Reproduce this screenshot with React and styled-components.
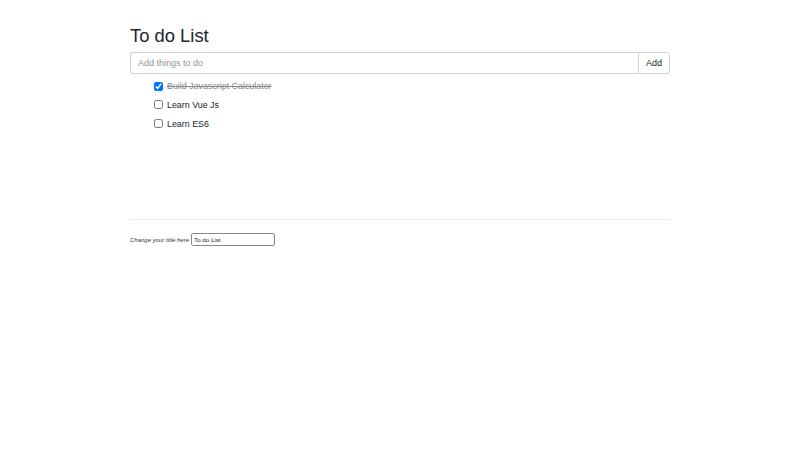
import React, { useState } from "react";
import styled, { createGlobalStyle } from "styled-components";

const GlobalStyle = createGlobalStyle`
  body {
    margin: 0;
    background: #fff;
    font-family: "Liberation Sans", Arial, sans-serif;
    color: #212529;
  }
`;

const Container = styled.div`
  width: 540px;
  margin: 0 auto;
  padding-top: 25px;
`;

const Title = styled.h1`
  margin: 0 0 5px;
  font-size: 18.4px;
  font-weight: 400;
  line-height: 1.2;
  color: #212529;
`;

const InputGroup = styled.form`
  display: flex;
  height: 22px;
  margin: 0;
`;

const TextInput = styled.input`
  flex: 1;
  min-width: 0;
  box-sizing: border-box;
  height: 100%;
  padding: 0 7px;
  border: 1px solid #ced4da;
  border-right: none;
  border-radius: 3px 0 0 3px;
  font-family: inherit;
  font-size: 9px;
  color: #495057;
  outline: none;
  &::placeholder {
    color: #8e959b;
  }
`;

const AddButton = styled.button`
  width: 32px;
  box-sizing: border-box;
  height: 100%;
  padding: 0;
  border: 1px solid #ced4da;
  border-radius: 0 3px 3px 0;
  background: #fff;
  font-family: inherit;
  font-size: 9px;
  color: #212529;
  cursor: pointer;
`;

const Main = styled.div`
  min-height: 145px;
  padding-top: 3px;
  box-sizing: border-box;
`;

const List = styled.ul`
  list-style: none;
  margin: 0;
  padding: 0 0 0 24px;
`;

const Item = styled.li`
  display: flex;
  align-items: center;
  height: 18.6px;
  font-size: 8.9px;
`;

const Check = styled.input`
  width: 9px;
  height: 9px;
  margin: 0 4px 0 0;
  accent-color: #0075ff;
`;

const Label = styled.span`
  color: ${(p) => (p.$done ? "#8a8a8a" : "#212529")};
  text-decoration: ${(p) => (p.$done ? "line-through" : "none")};
`;

const Divider = styled.hr`
  margin: 0 0 13px;
  border: none;
  border-top: 1px solid #eeeeee;
`;

const Footer = styled.div`
  display: flex;
  align-items: center;
  gap: 2px;
  font-size: 6px;
`;

const FooterLabel = styled.em`
  color: #333;
`;

const TitleInput = styled.input`
  width: 84px;
  height: 13px;
  box-sizing: border-box;
  padding: 0 2px;
  border: 1px solid #8a8a8a;
  border-radius: 2px;
  font-family: inherit;
  font-size: 6.2px;
  color: #222;
  outline: none;
`;

export default function App() {
  const [title, setTitle] = useState("To do List");
  const [text, setText] = useState("");
  const [todos, setTodos] = useState([
    { id: 1, label: "Build Javascript Calculator", done: true },
    { id: 2, label: "Learn Vue Js", done: false },
    { id: 3, label: "Learn ES6", done: false },
  ]);

  const toggle = (id) =>
    setTodos((list) => list.map((t) => (t.id === id ? { ...t, done: !t.done } : t)));

  const add = (e) => {
    e.preventDefault();
    if (!text.trim()) return;
    setTodos((list) => [...list, { id: Date.now(), label: text.trim(), done: false }]);
    setText("");
  };

  return (
    <>
      <GlobalStyle />
      <Container>
        <Title>{title}</Title>
        <InputGroup onSubmit={add}>
          <TextInput
            placeholder="Add things to do"
            value={text}
            onChange={(e) => setText(e.target.value)}
          />
          <AddButton type="submit">Add</AddButton>
        </InputGroup>
        <Main>
          <List>
            {todos.map((t) => (
              <Item key={t.id}>
                <Check type="checkbox" checked={t.done} onChange={() => toggle(t.id)} />
                <Label $done={t.done}>{t.label}</Label>
              </Item>
            ))}
          </List>
        </Main>
        <Divider />
        <Footer>
          <FooterLabel>Change your title here</FooterLabel>
          <TitleInput value={title} onChange={(e) => setTitle(e.target.value)} />
        </Footer>
      </Container>
    </>
  );
}
